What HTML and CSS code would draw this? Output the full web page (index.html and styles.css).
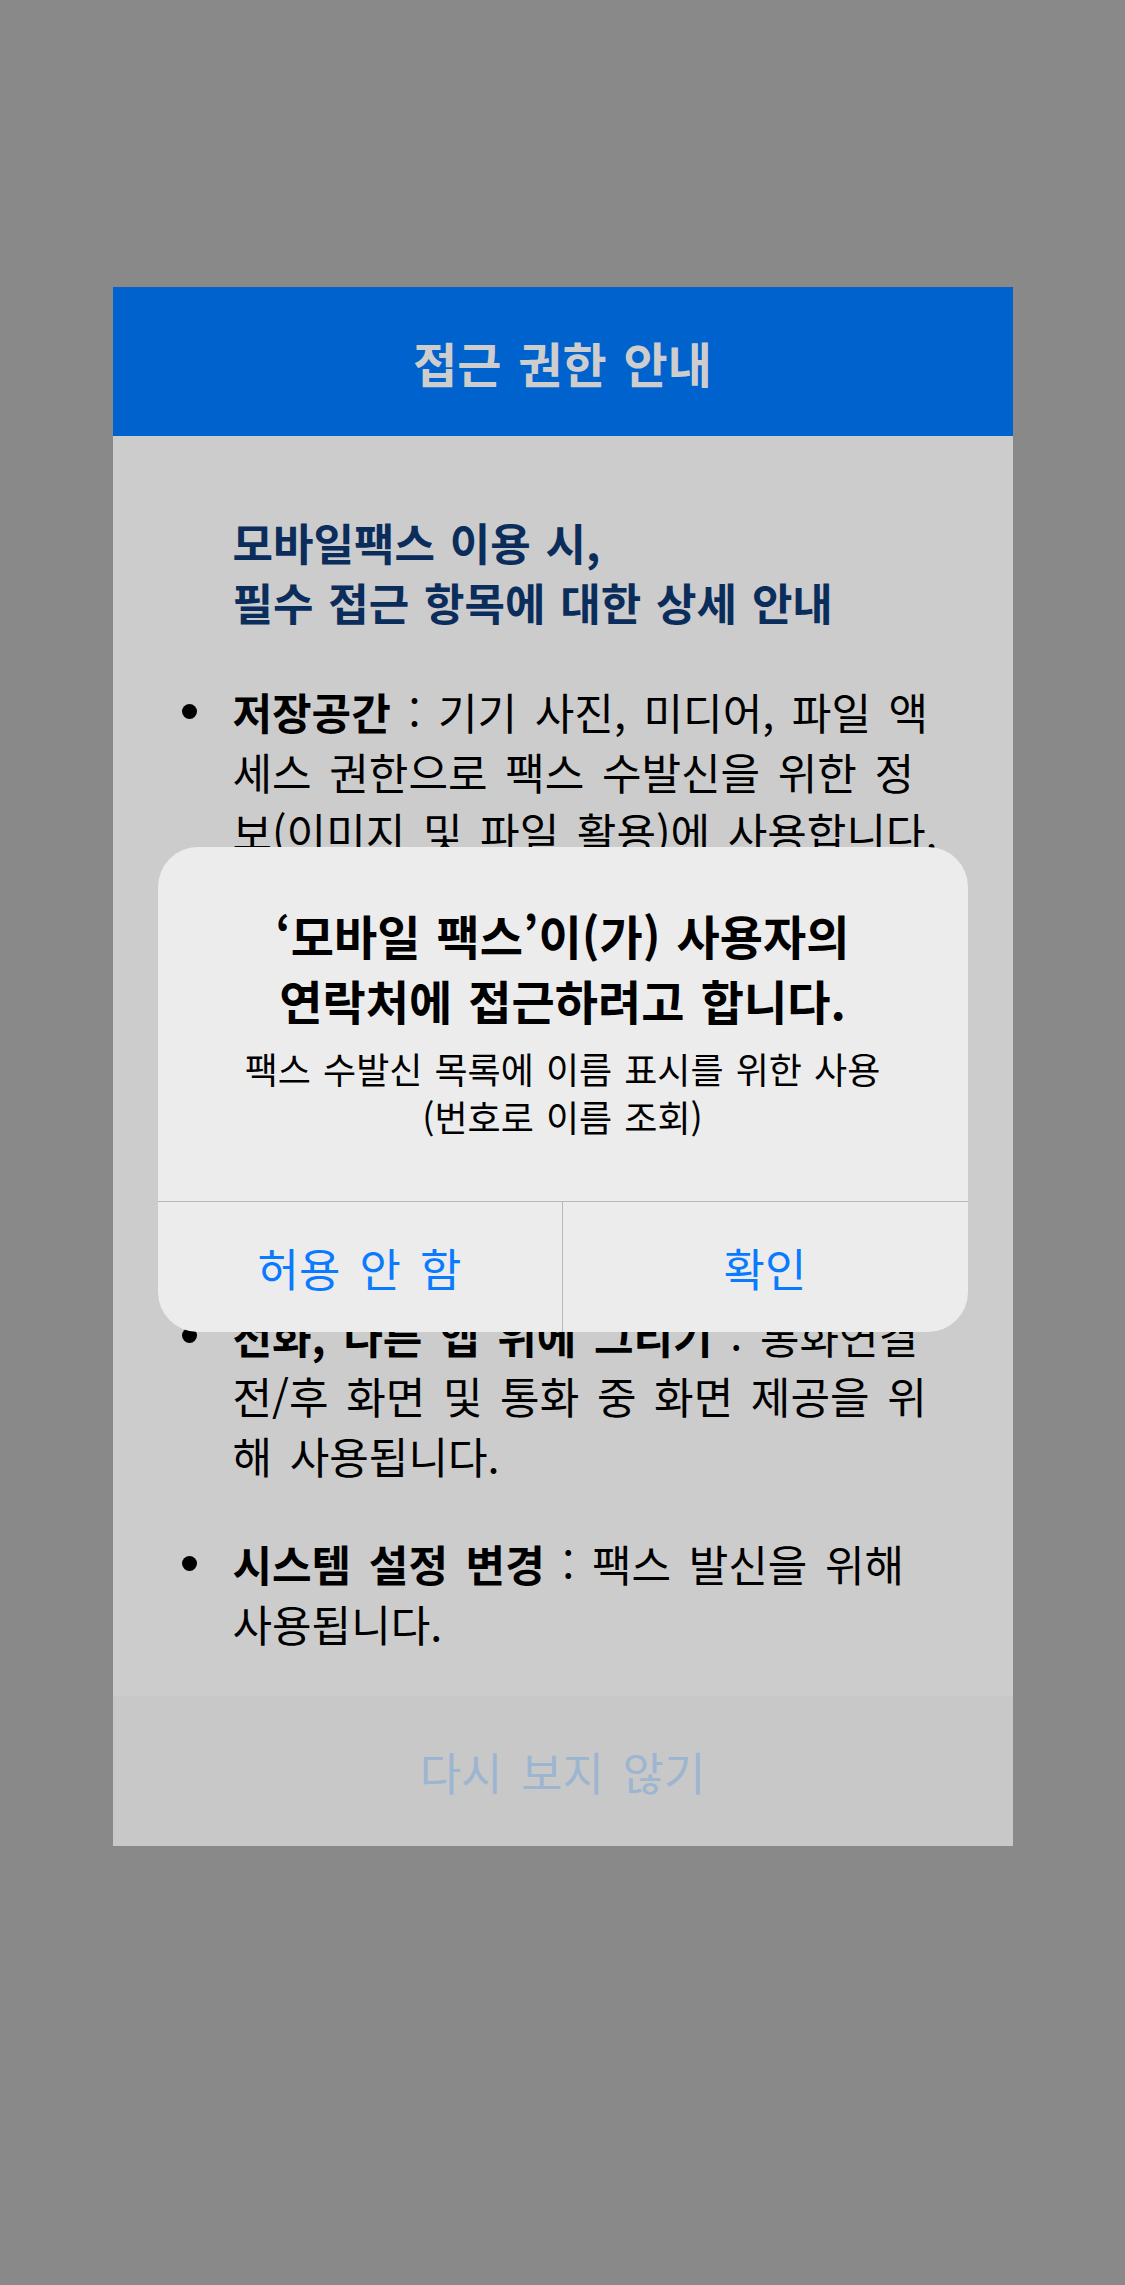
FILE: index.html
```html
<!DOCTYPE html>
<html lang="ko">
<head>
<meta charset="utf-8">
<title>접근 권한 안내</title>
<link rel="stylesheet" href="styles.css">
</head>
<body>
<div class="page">
  <section class="card">
    <header class="card-header">접근 권한 안내</header>
    <div class="card-body">
      <h2 class="intro">모바일팩스 이용 시,<br>필수 접근 항목에 대한 상세 안내</h2>
      <ul class="perm-list">
        <li class="perm"><span class="dot"></span><p class="perm-text"><b>저장공간</b> : 기기 사진, 미디어, 파일 액세스 권한으로 팩스 수발신을 위한 정보(이미지 및 파일 활용)에 사용합니다.</p></li>
        <li class="perm"><span class="dot"></span><p class="perm-text"><b>연락처</b> : 팩스 수발신 목록에 이름 표시를 위해 연락처 정보를 조회하며, 번호로 이름 검색에 사용됩니다.</p></li>
        <li class="perm"><span class="dot"></span><p class="perm-text"><b>전화</b> : 전화번호 확인 및 팩스 발신을 위해 사용됩니다.</p></li>
        <li class="perm"><span class="dot"></span><p class="perm-text"><b>전화, 다른 앱 위에 그리기</b> : 통화연결 전/후 화면 및 통화 중 화면 제공을 위해 사용됩니다.</p></li>
        <li class="perm"><span class="dot"></span><p class="perm-text"><b>시스템 설정 변경</b> : 팩스 발신을 위해 사용됩니다.</p></li>
      </ul>
    </div>
    <footer class="card-footer">다시 보지 않기</footer>
  </section>

  <div class="alert" role="alertdialog">
    <div class="alert-content">
      <p class="alert-title">‘모바일 팩스’이(가) 사용자의 연락처에 접근하려고 합니다.</p>
      <p class="alert-message">팩스 수발신 목록에 이름 표시를 위한 사용<br>(번호로 이름 조회)</p>
    </div>
    <div class="alert-actions">
      <button class="alert-btn alert-btn-left" type="button">허용 안 함</button>
      <button class="alert-btn" type="button">확인</button>
    </div>
  </div>
</div>
</body>
</html>
```

FILE: styles.css
```css
html, body {
  margin: 0;
  padding: 0;
}

body {
  background: #898989;
  font-family: "Noto Sans CJK KR", "Noto Sans", sans-serif;
  color: #000;
}

.page {
  position: relative;
  min-height: 2285px;
  padding-top: 287px;
  box-sizing: border-box;
}

.card {
  width: 900px;
  margin: 0 auto;
  background: #cccccc;
  display: flex;
  flex-direction: column;
}

.card-header {
  height: 149px;
  background: #0062cc;
  color: #cdcdcd;
  font-size: 48px;
  font-weight: 700;
  word-spacing: 3.5px;
  display: flex;
  align-items: center;
  justify-content: center;
}

.card-body {
  padding: 76px 68px 43px 69px;
}

.intro {
  margin: 0 0 49px 51px;
  font-size: 44px;
  line-height: 60px;
  font-weight: 700;
  word-spacing: 2.5px;
  color: #0b2d5c;
}

.perm-list {
  list-style: none;
  margin: 0;
  padding: 0;
  display: flex;
  flex-direction: column;
  gap: 48px;
}

.perm {
  display: flex;
  align-items: flex-start;
}

.dot {
  flex: none;
  width: 15px;
  height: 15px;
  border-radius: 50%;
  background: #000;
  margin-top: 23px;
  margin-right: 36px;
}

.perm-text {
  margin: 0;
  flex: 1;
  font-size: 43px;
  line-height: 60px;
  word-spacing: 5.6px;
}

.perm-text b {
  font-weight: 700;
}

.card-footer {
  height: 150px;
  background: #c8c8c8;
  color: #9eb5d0;
  font-size: 45px;
  word-spacing: 6px;
  display: flex;
  align-items: center;
  justify-content: center;
}

/* system alert lying over the page */
.alert {
  position: absolute;
  top: 847px;
  left: 0;
  right: 0;
  margin: 0 auto;
  width: 810px;
  background: #ececec;
  border-radius: 40px;
  overflow: hidden;
}

.alert-content {
  padding: 55px 60px 61px;
  text-align: center;
}

.alert-title {
  margin: 0;
  font-size: 47px;
  line-height: 65px;
  font-weight: 700;
  word-spacing: 3px;
  word-break: keep-all;
}

.alert-message {
  margin: 12px 0 0;
  font-size: 36px;
  line-height: 48px;
  word-spacing: 2px;
}

.alert-actions {
  display: grid;
  grid-template-columns: 1fr 1fr;
  border-top: 1px solid #b8b8b8;
}

.alert-btn {
  height: 130px;
  border: 0;
  background: transparent;
  color: #0a7aff;
  font-family: "Noto Sans CJK KR", "Noto Sans", sans-serif;
  font-size: 45px;
  word-spacing: 6.5px;
  padding: 0;
}

.alert-btn-left {
  border-right: 1px solid #b8b8b8;
}
```
